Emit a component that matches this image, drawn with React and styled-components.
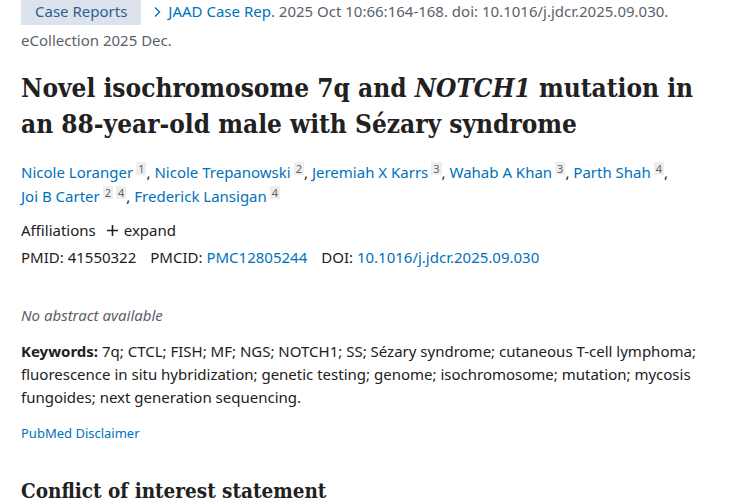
import React from "react";
import styled, { createGlobalStyle } from "styled-components";

const Global = createGlobalStyle`
  html, body { margin: 0; padding: 0; background: #fff; }
  body { font-family: "Noto Sans", "Open Sans", sans-serif; color: #212121; }
  a { text-decoration: none; }
`;

const Page = styled.main`
  width: 750px;
  height: 500px;
  overflow: hidden;
  padding: 0 48px 0 21px;
  box-sizing: border-box;
`;

const CiteRow = styled.div`
  font-size: 15px;
  line-height: 29px;
  color: #5b616b;
  margin-top: -3px;
`;

const Chip = styled.span`
  display: inline-block;
  background: #dde3ec;
  color: #2f5f8f;
  padding: 0 14px;
  margin-right: 10px;
  line-height: 27px;
`;

const Link = styled.a`
  color: #0071bc;
  cursor: pointer;
`;

const Chevron = styled.svg`
  width: 12px;
  height: 12px;
  margin-right: 5px;
  vertical-align: -1px;
`;

const Title = styled.h1`
  font-family: "DejaVu Serif", serif;
  font-stretch: condensed;
  font-weight: 700;
  font-size: 26px;
  line-height: 36px;
  color: #212121;
  margin: 15px 0 18px;
`;

const Authors = styled.div`
  font-size: 15px;
  line-height: 24px;
  color: #212121;
`;

const Author = styled.span`
  white-space: nowrap;
`;

const Sup = styled.span`
  display: inline-block;
  background: #eeeeee;
  color: #5b616b;
  font-size: 11px;
  line-height: 13px;
  padding: 0 2px;
  margin-left: 3px;
  vertical-align: 5px;
`;

const InfoLine = styled.div`
  font-size: 15px;
  line-height: 27px;
  margin-top: ${(p) => p.$mt || 0}px;
  display: flex;
  align-items: center;
  gap: ${(p) => p.$gap || 0}px;
`;

const Expand = styled.span`
  display: inline-flex;
  align-items: center;
  gap: 5px;
  margin-left: 10px;
`;

const Italic = styled.p`
  font-style: italic;
  font-size: 15px;
  color: #5b616b;
  margin: 32px 0 0;
  line-height: 24px;
`;

const Keywords = styled.p`
  font-size: 15px;
  line-height: 23px;
  margin: 13px 0 0;
  b { font-weight: 700; }
`;

const Disclaimer = styled.a`
  display: block;
  color: #0071bc;
  font-size: 13px;
  margin-top: 14px;
  line-height: 20px;
`;

const H2 = styled.h2`
  font-family: "DejaVu Serif", serif;
  font-stretch: condensed;
  font-weight: 700;
  font-size: 20.5px;
  margin: 36px 0 0;
  color: #212121;
`;

const authors = [
  { n: "Nicole Loranger", s: ["1"] },
  { n: "Nicole Trepanowski", s: ["2"] },
  { n: "Jeremiah X Karrs", s: ["3"] },
  { n: "Wahab A Khan", s: ["3"] },
  { n: "Parth Shah", s: ["4"] },
  { n: "Joi B Carter", s: ["2", "4"] },
  { n: "Frederick Lansigan", s: ["4"] },
];

export default function App() {
  return (
    <>
      <Global />
      <Page>
        <CiteRow>
          <Chip>Case Reports</Chip>
          <Link>
            <Chevron viewBox="0 0 12 12">
              <path d="M4 1.5 L8.5 6 L4 10.5" fill="none" stroke="#0071bc" strokeWidth="1.4" />
            </Chevron>
            JAAD Case Rep.
          </Link>{" "}
          2025 Oct 10:66:164-168. doi: 10.1016/j.jdcr.2025.09.030. eCollection 2025 Dec.
        </CiteRow>
        <Title>
          Novel isochromosome 7q and <i>NOTCH1</i> mutation in an 88-year-old male with Sézary syndrome
        </Title>
        <Authors>
          {authors.map((a, i) => (
            <React.Fragment key={a.n}>
              <Author>
                <Link>{a.n}</Link>
                {a.s.map((s) => (
                  <Sup key={s}>{s}</Sup>
                ))}
                {i < authors.length - 1 ? "," : ""}
              </Author>
              {i < authors.length - 1 ? " " : ""}
            </React.Fragment>
          ))}
        </Authors>
        <InfoLine $mt={9}>
          Affiliations
          <Expand>
            <svg width="13" height="13" viewBox="0 0 13 13">
              <path d="M6.5 1 V12 M1 6.5 H12" stroke="#212121" strokeWidth="1.6" />
            </svg>
            expand
          </Expand>
        </InfoLine>
        <InfoLine $gap={14}>
          <span>PMID: 41550322</span>
          <span>
            PMCID: <Link>PMC12805244</Link>
          </span>
          <span>
            DOI: <Link>10.1016/j.jdcr.2025.09.030</Link>
          </span>
        </InfoLine>
        <Italic>No abstract available</Italic>
        <Keywords>
          <b>Keywords:</b> 7q; CTCL; FISH; MF; NGS; NOTCH1; SS; Sézary syndrome; cutaneous T-cell lymphoma;
          fluorescence in situ hybridization; genetic testing; genome; isochromosome; mutation; mycosis
          fungoides; next generation sequencing.
        </Keywords>
        <Disclaimer>PubMed Disclaimer</Disclaimer>
        <H2>Conflict of interest statement</H2>
      </Page>
    </>
  );
}
